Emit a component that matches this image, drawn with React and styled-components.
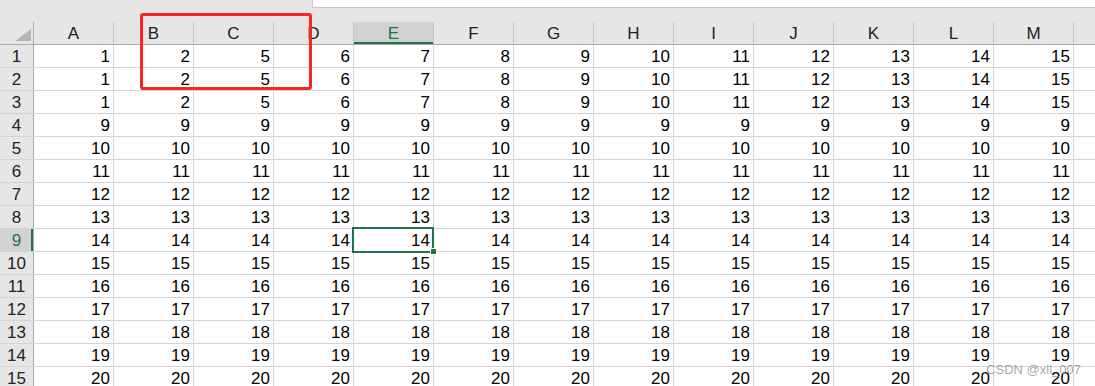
import React from "react";
import styled, { createGlobalStyle, css } from "styled-components";

const Global = createGlobalStyle`
  html, body { margin: 0; padding: 0; background: #ffffff; }
  body { font-family: "Liberation Sans", Arial, sans-serif; overflow: hidden; }
`;

const GREEN = "#217346";

const Page = styled.div`
  position: relative;
  width: 1095px;
  height: 386px;
  overflow: hidden;
  background: #fff;
`;

const TopBand = styled.div`
  height: 22px;
  background: #e6e6e6;
  display: flex;
  align-items: flex-start;
  padding-left: 312px;
`;

const FormulaBox = styled.div`
  flex: 1;
  height: 7px;
  background: #ffffff;
  border-left: 1px solid #c6c6c6;
  border-bottom: 1px solid #c6c6c6;
`;

const HeaderRow = styled.div`
  display: flex;
  height: 22px;
  background: #e6e6e6;
  border-bottom: 1px solid #ababab;
`;

const Corner = styled.div`
  position: relative;
  width: 34px;
  box-sizing: border-box;
  flex: none;
  border-right: 1px solid #ababab;
  &::after {
    content: "";
    position: absolute;
    right: 2px;
    bottom: 3px;
    width: 0;
    height: 0;
    border-left: 16px solid transparent;
    border-bottom: 12px solid #b4b4b4;
  }
`;

const ColHeader = styled.div`
  width: 80px;
  box-sizing: border-box;
  flex: none;
  border-right: 1px solid #c6c6c6;
  display: flex;
  align-items: center;
  justify-content: center;
  font-size: 17px;
  color: #222;
  padding-top: 1px;
  ${(p) =>
    p.$selected &&
    css`
      background: #d2d2d2;
      color: ${GREEN};
      box-shadow: inset 0 -2px 0 ${GREEN};
    `}
  ${(p) => p.$last && css`flex: 1; border-right: none;`}
`;

const Row = styled.div`
  display: flex;
  height: 23px;
  box-sizing: border-box;
  border-bottom: 1px solid #d4d4d4;
`;

const RowHeader = styled.div`
  width: 34px;
  flex: none;
  background: #e6e6e6;
  border-right: 1px solid #ababab;
  display: flex;
  align-items: center;
  justify-content: center;
  font-size: 17px;
  color: #222;
  padding-top: 2px;
  box-sizing: border-box;
  ${(p) =>
    p.$selected &&
    css`
      background: #d2d2d2;
      color: ${GREEN};
      box-shadow: inset -2px 0 0 ${GREEN};
    `}
`;

const Cell = styled.div`
  position: relative;
  width: 80px;
  flex: none;
  box-sizing: border-box;
  border-right: 1px solid #d4d4d4;
  display: flex;
  align-items: center;
  justify-content: flex-end;
  padding: 2px 3px 0 0;
  font-size: 17px;
  color: #000;
  ${(p) => p.$last && css`flex: 1; border-right: none;`}
  ${(p) =>
    p.$active &&
    css`
      &::before {
        content: "";
        position: absolute;
        left: -2px;
        top: -2px;
        right: -1px;
        bottom: -2px;
        border: 2px solid ${GREEN};
        z-index: 2;
      }
      &::after {
        content: "";
        position: absolute;
        right: -4px;
        bottom: -4px;
        width: 5px;
        height: 5px;
        background: ${GREEN};
        border: 1px solid #fff;
        z-index: 3;
      }
    `}
`;

const Highlight = styled.div`
  position: absolute;
  left: 140px;
  top: 13px;
  width: 172px;
  height: 77px;
  box-sizing: border-box;
  border: 3px solid #fb2424;
  border-radius: 3px;
  z-index: 5;
  pointer-events: none;
`;

const Watermark = styled.div`
  position: absolute;
  right: 14px;
  bottom: 9px;
  font-family: "Liberation Sans", Arial, sans-serif;
  font-size: 13px;
  color: rgba(150, 150, 150, 0.85);
  z-index: 6;
`;

const COLS = ["A", "B", "C", "D", "E", "F", "G", "H", "I", "J", "K", "L", "M"];

const rows = [];
for (let i = 1; i <= 15; i++) {
  if (i <= 3) rows.push([1, 2, 5, 6, 7, 8, 9, 10, 11, 12, 13, 14, 15]);
  else rows.push(Array(13).fill(i + 5));
}

export default function App() {
  return (
    <Page>
      <Global />
      <TopBand>
        <FormulaBox />
      </TopBand>
      <HeaderRow>
        <Corner />
        {COLS.map((c) => (
          <ColHeader key={c} $selected={c === "E"}>
            {c}
          </ColHeader>
        ))}
        <ColHeader $last />
      </HeaderRow>
      {rows.map((vals, ri) => (
        <Row key={ri}>
          <RowHeader $selected={ri === 8}>{ri + 1}</RowHeader>
          {vals.map((v, ci) => (
            <Cell key={ci} $active={ri === 8 && ci === 4}>
              {v}
            </Cell>
          ))}
          <Cell $last />
        </Row>
      ))}
      <Highlight />
      <Watermark>CSDN @xll_007</Watermark>
    </Page>
  );
}
